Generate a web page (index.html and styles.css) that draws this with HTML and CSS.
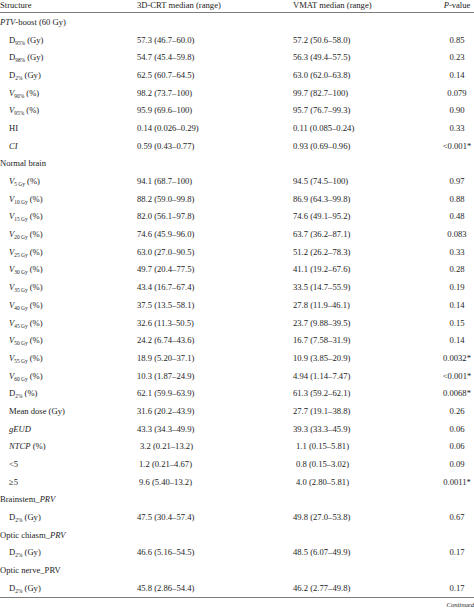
FILE: index.html
```html
<!DOCTYPE html>
<html>
<head>
<meta charset="utf-8">
<link rel="stylesheet" href="styles.css">
</head>
<body>
<div class="tbl">
  <div class="row head">
    <div>Structure</div><div>3D-CRT median (range)</div><div>VMAT median (range)</div><div class="p"><i>P</i>-value</div>
  </div>
  <div class="body">
    <div class="row"><div class="grp"><i>PTV</i>-boost (60 Gy)</div><div></div><div></div><div></div></div>
    <div class="row"><div class="ind">D<sub>95%</sub> (Gy)</div><div>57.3 (46.7–60.0)</div><div>57.2 (50.6–58.0)</div><div class="p">0.85</div></div>
    <div class="row"><div class="ind">D<sub>98%</sub> (Gy)</div><div>54.7 (45.4–59.8)</div><div>56.3 (49.4–57.5)</div><div class="p">0.23</div></div>
    <div class="row"><div class="ind">D<sub>2%</sub> (Gy)</div><div>62.5 (60.7–64.5)</div><div>63.0 (62.0–63.8)</div><div class="p">0.14</div></div>
    <div class="row"><div class="ind"><i>V</i><sub>90%</sub> (%)</div><div>98.2 (73.7–100)</div><div>99.7 (82.7–100)</div><div class="p">0.079</div></div>
    <div class="row"><div class="ind"><i>V</i><sub>95%</sub> (%)</div><div>95.9 (69.6–100)</div><div>95.7 (76.7–99.3)</div><div class="p">0.90</div></div>
    <div class="row"><div class="ind">HI</div><div>0.14 (0.026–0.29)</div><div>0.11 (0.085–0.24)</div><div class="p">0.33</div></div>
    <div class="row"><div class="ind"><i>CI</i></div><div>0.59 (0.43–0.77)</div><div>0.93 (0.69–0.96)</div><div class="p">&lt;0.001*</div></div>
    <div class="row"><div class="grp">Normal brain</div><div></div><div></div><div></div></div>
    <div class="row"><div class="ind"><i>V</i><sub>5 Gy</sub> (%)</div><div>94.1 (68.7–100)</div><div>94.5 (74.5–100)</div><div class="p">0.97</div></div>
    <div class="row"><div class="ind"><i>V</i><sub>10 Gy</sub> (%)</div><div>88.2 (59.0–99.8)</div><div>86.9 (64.3–99.8)</div><div class="p">0.88</div></div>
    <div class="row"><div class="ind"><i>V</i><sub>15 Gy</sub> (%)</div><div>82.0 (56.1–97.8)</div><div>74.6 (49.1–95.2)</div><div class="p">0.48</div></div>
    <div class="row"><div class="ind"><i>V</i><sub>20 Gy</sub> (%)</div><div>74.6 (45.9–96.0)</div><div>63.7 (36.2–87.1)</div><div class="p">0.083</div></div>
    <div class="row"><div class="ind"><i>V</i><sub>25 Gy</sub> (%)</div><div>63.0 (27.0–90.5)</div><div>51.2 (26.2–78.3)</div><div class="p">0.33</div></div>
    <div class="row"><div class="ind"><i>V</i><sub>30 Gy</sub> (%)</div><div>49.7 (20.4–77.5)</div><div>41.1 (19.2–67.6)</div><div class="p">0.28</div></div>
    <div class="row"><div class="ind"><i>V</i><sub>35 Gy</sub> (%)</div><div>43.4 (16.7–67.4)</div><div>33.5 (14.7–55.9)</div><div class="p">0.19</div></div>
    <div class="row"><div class="ind"><i>V</i><sub>40 Gy</sub> (%)</div><div>37.5 (13.5–58.1)</div><div>27.8 (11.9–46.1)</div><div class="p">0.14</div></div>
    <div class="row"><div class="ind"><i>V</i><sub>45 Gy</sub> (%)</div><div>32.6 (11.3–50.5)</div><div>23.7 (9.88–39.5)</div><div class="p">0.15</div></div>
    <div class="row"><div class="ind"><i>V</i><sub>50 Gy</sub> (%)</div><div>24.2 (6.74–43.6)</div><div>16.7 (7.58–31.9)</div><div class="p">0.14</div></div>
    <div class="row"><div class="ind"><i>V</i><sub>55 Gy</sub> (%)</div><div>18.9 (5.20–37.1)</div><div>10.9 (3.85–20.9)</div><div class="p">0.0032*</div></div>
    <div class="row"><div class="ind"><i>V</i><sub>60 Gy</sub> (%)</div><div>10.3 (1.87–24.9)</div><div>4.94 (1.14–7.47)</div><div class="p">&lt;0.001*</div></div>
    <div class="row"><div class="ind">D<sub>2%</sub> (%)</div><div>62.1 (59.9–63.9)</div><div>61.3 (59.2–62.1)</div><div class="p">0.0068*</div></div>
    <div class="row"><div class="ind">Mean dose (Gy)</div><div>31.6 (20.2–43.9)</div><div>27.7 (19.1–38.8)</div><div class="p">0.26</div></div>
    <div class="row"><div class="ind"><i>gEUD</i></div><div>43.3 (34.3–49.9)</div><div>39.3 (33.3–45.9)</div><div class="p">0.06</div></div>
    <div class="row"><div class="ind"><i>NTCP</i> (%)</div><div class="sh">3.2 (0.21–13.2)</div><div class="sh">1.1 (0.15–5.81)</div><div class="p">0.06</div></div>
    <div class="row"><div class="ind">&lt;5</div><div class="sh2">1.2 (0.21–4.67)</div><div class="sh">0.8 (0.15–3.02)</div><div class="p">0.09</div></div>
    <div class="row"><div class="ind">≥5</div><div class="sh2">9.6 (5.40–13.2)</div><div class="sh">4.0 (2.80–5.81)</div><div class="p">0.0011*</div></div>
    <div class="row"><div class="grp">Brainstem_<i>PRV</i></div><div></div><div></div><div></div></div>
    <div class="row"><div class="ind">D<sub>2%</sub> (Gy)</div><div>47.5 (30.4–57.4)</div><div>49.8 (27.0–53.8)</div><div class="p">0.67</div></div>
    <div class="row"><div class="grp">Optic chiasm_<i>PRV</i></div><div></div><div></div><div></div></div>
    <div class="row"><div class="ind">D<sub>2%</sub> (Gy)</div><div>46.6 (5.16–54.5)</div><div>48.5 (6.07–49.9)</div><div class="p">0.17</div></div>
    <div class="row"><div class="grp">Optic nerve_PRV</div><div></div><div></div><div></div></div>
    <div class="row"><div class="ind">D<sub>2%</sub> (Gy)</div><div>45.8 (2.86–54.4)</div><div>46.2 (2.77–49.8)</div><div class="p">0.17</div></div>
  </div>
  <div class="cont"><i>Continued</i></div>
</div>
</body>
</html>
```

FILE: styles.css
```css
html, body {
  margin: 0;
  padding: 0;
  background: #ffffff;
}
body {
  width: 474px;
  height: 611px;
  overflow: hidden;
  font-family: "Liberation Serif", "Times New Roman", serif;
  font-size: 8.6px;
  color: #1c1c1c;
}
.tbl {
  width: 474px;
}
.row {
  display: grid;
  grid-template-columns: 137px 156px 147px 34px;
  align-items: center;
  height: 17.7px;
  white-space: nowrap;
}
.row.head {
  height: 12px;
  align-items: start;
  line-height: 10px;
  border-bottom: 1.6px solid #7c7c7c;
}
.body {
  border-bottom: 1.6px solid #7c7c7c;
}
.grp {
  padding-left: 0;
}
.ind {
  padding-left: 9px;
}
.p {
  text-align: center;
}
.sh {
  padding-left: 3px;
}
.sh2 {
  padding-left: 2px;
}
sub {
  font-size: 5.4px;
  vertical-align: -1.5px;
  line-height: 0;
}
.cont {
  text-align: right;
  font-size: 6.6px;
  padding-top: 2px;
  line-height: 9px;
}
```
